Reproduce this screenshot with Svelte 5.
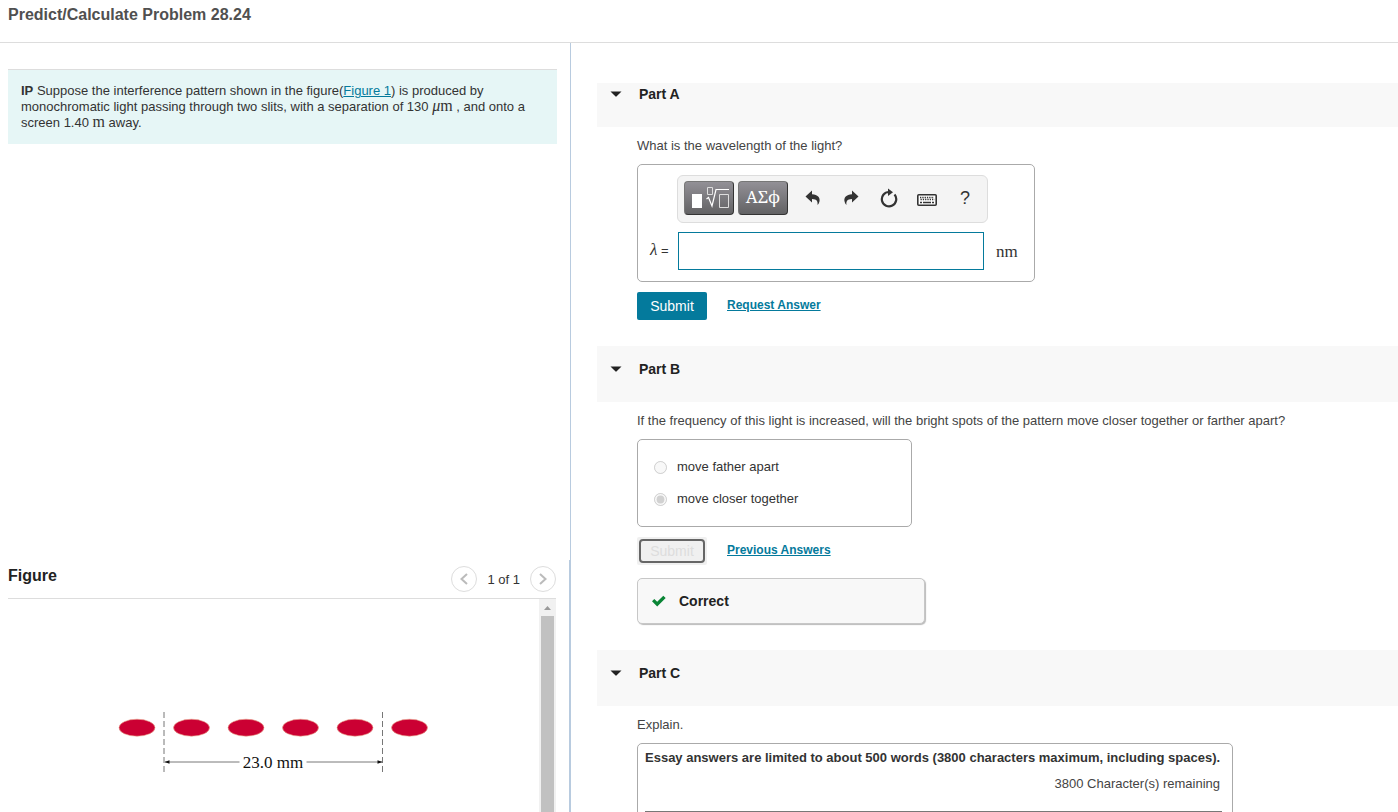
<script>
  let answer = $state('');
  let choice = $state('closer');
  let essay = $state('');

  const options = [
    { id: 'apart', label: 'move father apart' },
    { id: 'closer', label: 'move closer together' }
  ];
  const spots = [137, 191.5, 246, 300.5, 355, 409.5];
</script>

{#snippet partHeader(title)}
  <header class="part-head">
    <button class="toggle" type="button" aria-label={`Collapse ${title}`}>
      <svg width="12" height="6" viewBox="0 0 12 6"><path d="M.5.4h11L6.7 5.3Q6 6 5.3 5.3Z" fill="#222" /></svg>
    </button>
    <h2>{title}</h2>
  </header>
{/snippet}

<div class="page">
  <header class="title"><h1>Predict/Calculate Problem 28.24</h1></header>

  <main>
    <aside>
      <section class="intro">
        <p>
          <b>IP</b> Suppose the interference pattern shown in the figure(<a href="#figure">Figure 1</a>) is produced by
          monochromatic light passing through two slits, with a separation of 130 <span class="math"><i>μ</i>m</span> , and onto a screen 1.40 <span class="math">m</span> away.
        </p>
      </section>

      <section class="figure" id="figure">
        <div class="figure-head">
          <h2>Figure</h2>
          <nav>
            <button type="button" aria-label="Previous figure">
              <svg width="12" height="14" viewBox="0 0 12 14"><path d="M9 2 3.5 7 9 12" fill="none" stroke="#bbb" stroke-width="2" /></svg>
            </button>
            <span>1 of 1</span>
            <button type="button" aria-label="Next figure">
              <svg width="12" height="14" viewBox="0 0 12 14"><path d="M3 2l5.500 5L3 12" fill="none" stroke="#bbb" stroke-width="2" /></svg>
            </button>
          </nav>
        </div>
        <div class="viewer">
          <div class="canvas">
            <svg width="340" height="90" viewBox="100 700 340 90">
              {#each spots as x}
                <ellipse cx={x} cy="727.700" rx="18" ry="8.500" fill="#cb0033" stroke="#e9a58c" stroke-width=".6" />
              {/each}
              <path d="M164 712v61M382.500 712v61" stroke="#777" stroke-dasharray="6 3" fill="none" />
              <path d="M165 762h74.500M306.500 762H382" stroke="#555" stroke-width=".8" />
              <path d="M164.500 762l5-1.800v3.600ZM382.500 762l-5-1.800v3.600Z" fill="#111" />
              <text x="273" y="767.500" text-anchor="middle" font-family="'Liberation Serif', serif" font-size="17" fill="#111">23.0 mm</text>
            </svg>
          </div>
          <div class="scrollbar">
            <button type="button" aria-label="Scroll up">
              <svg width="7" height="4" viewBox="0 0 7 4"><path d="M0 4 3.500 0 7 4Z" fill="#999" /></svg>
            </button>
            <div class="thumb"></div>
          </div>
        </div>
      </section>
    </aside>

    <div class="parts">
      <section class="part first">
        {@render partHeader('Part A')}
        <div class="body">
          <p>What is the wavelength of the light?</p>
          <div class="box equation">
            <div class="toolbar">
              <button class="dark" type="button" aria-label="Templates">
                <svg width="40" height="24" viewBox="0 0 40 24">
                  <path d="M3 8h10v14H3Z" fill="#fff" />
                  <path d="M18.500 1.500h5v7h-5ZM30.500 8.500h9v13h-9Z" fill="none" stroke="#ddd" />
                  <path d="M17.500 13l2-1.500 3.500 8.500 4-16.500H40" fill="none" stroke="#fff" stroke-width="1.200" />
                </svg>
              </button>
              <button class="dark greek" type="button">ΑΣϕ</button>
              <div class="tools">
                <button type="button" aria-label="Undo">
                  <svg width="16" height="18" viewBox="0 0 16 16"><path d="M.5 6.500 7 .5v3.700c5.800.2 8.300 3.500 7.500 7-.3 1.500-1 3-2 3.900.5-3.400-.3-6-5.500-6.100V12.500Z" fill="#333" /></svg>
                </button>
                <button type="button" aria-label="Redo">
                  <svg width="16" height="18" viewBox="0 0 16 16"><path d="M15.500 6.500 9 .5v3.700c-5.800.2-8.300 3.500-7.500 7 .3 1.500 1 3 2 3.900-.5-3.400.3-6 5.500-6.100V12.500Z" fill="#333" /></svg>
                </button>
                <button type="button" aria-label="Reset">
                  <svg width="18" height="20" viewBox="0 0 18 20"><path d="M9 4A7.200 7.200 0 1 0 14.500 6.500" fill="none" stroke="#333" stroke-width="2.200" /><path d="M8 .5 13 4.300 8 8Z" fill="#333" /></svg>
                </button>
                <button type="button" aria-label="Keyboard shortcuts">
                  <svg class="low" width="20" height="12" viewBox="0 0 20 12">
                    <rect x=".8" y=".8" width="18.400" height="10.400" rx="1" fill="#fff" stroke="#333" stroke-width="1.600" />
                    <path d="M3 3.500h14M3.500 5.500h14" stroke="#333" stroke-width="1.400" stroke-dasharray="1.300 1" />
                    <path d="M3 8.500h2M6 8.500h8M15 8.500h2" stroke="#333" stroke-width="1.400" />
                  </svg>
                </button>
                <button class="help" type="button">?</button>
              </div>
            </div>
            <div class="entry">
              <label for="lambda"><i>λ</i> =</label>
              <input id="lambda" type="text" bind:value={answer} />
              <span class="math">nm</span>
            </div>
          </div>
          <div class="actions">
            <button class="submit" type="button">Submit</button>
            <a href="#request">Request Answer</a>
          </div>
        </div>
      </section>

      <section class="part">
        {@render partHeader('Part B')}
        <div class="body">
          <p>If the frequency of this light is increased, will the bright spots of the pattern move closer together or farther apart?</p>
          <div class="box choices">
            {#each options as option}
              <label>
                <input type="radio" name="spots" value={option.id} bind:group={choice} disabled />
                {option.label}
              </label>
            {/each}
          </div>
          <div class="actions">
            <button class="submit" type="button" disabled><span>Submit</span></button>
            <a href="#previous">Previous Answers</a>
          </div>
          <div class="feedback">
            <svg width="16" height="12" viewBox="0 0 16 12"><path d="M1 6.200 3.300 4 6.200 6.800 12.300.7 14.700 2.900 6.200 11.400Z" fill="#0a8536" /></svg>
            <strong>Correct</strong>
          </div>
        </div>
      </section>

      <section class="part">
        {@render partHeader('Part C')}
        <div class="body">
          <p>Explain.</p>
          <div class="box essay">
            <label for="essay">Essay answers are limited to about 500 words (3800 characters maximum, including spaces).</label>
            <span>{3800 - essay.length} Character(s) remaining</span>
            <textarea id="essay" bind:value={essay}></textarea>
          </div>
        </div>
      </section>
    </div>
  </main>
</div>

<style>
  :global(body) {
    margin: 0;
    background: #fff;
  }
  .page {
    height: 100vh;
    display: flex;
    flex-direction: column;
    overflow: hidden;
    font: 13px/16px 'Liberation Sans', Arial, sans-serif;
    color: #444;
  }
  .page * {
    box-sizing: border-box;
  }
  h1,
  h2,
  p {
    margin: 0;
  }
  button {
    font: inherit;
    color: inherit;
    padding: 0;
    border: 0;
    background: none;
    display: flex;
    align-items: center;
    justify-content: center;
    cursor: pointer;
  }
  a {
    color: #047a9c;
  }
  .math {
    font-family: 'Liberation Serif', serif;
    font-size: 16px;
    line-height: 1px;
  }
  .title {
    flex: none;
    padding: 5px 8px 17px;
    border-bottom: 1px solid #ddd;
  }
  .title h1 {
    font-size: 16px;
    line-height: 20px;
    color: #505050;
  }
  main {
    flex: 1;
    min-height: 0;
    display: grid;
    grid-template-columns: minmax(0, 571fr) minmax(0, 827fr);
  }
  aside {
    min-height: 0;
    display: flex;
    flex-direction: column;
  }
  .intro {
    flex: 1;
    padding: 26px 13px 0 8px;
    border-right: 1px solid #b8cbdf;
  }
  .intro p {
    padding: 13px 20px 13px 13px;
    border-top: 1px solid #ddd;
    background: #e6f6f6;
    color: #333;
  }
  .intro b {
    font-weight: bold;
  }
  .figure {
    height: 252px;
    display: flex;
    flex-direction: column;
    padding: 0 13px 0 8px;
    border-right: 2px solid #b8cbdf;
  }
  .figure-head {
    display: flex;
    justify-content: space-between;
    padding: 6px 0;
    border-bottom: 1px solid #ddd;
  }
  .figure-head h2 {
    font-size: 16px;
    line-height: 20px;
    color: #222;
  }
  nav {
    display: flex;
    align-items: center;
    gap: 10px;
    color: #333;
  }
  nav span {
    line-height: 14px;
    padding-top: 2px;
  }
  nav button {
    width: 26px;
    height: 26px;
    border: 1px solid #ddd;
    border-radius: 50%;
  }
  .viewer {
    flex: 1;
    min-height: 0;
    display: flex;
  }
  .canvas {
    flex: 1;
    padding: 101px 0 0 92px;
    overflow: hidden;
  }
  .canvas svg {
    display: block;
  }
  .scrollbar {
    width: 17px;
    display: flex;
    flex-direction: column;
    background: #f1f1f1;
  }
  .scrollbar button {
    height: 17px;
  }
  .thumb {
    flex: 1;
    margin: 0 2px;
    background: #c1c1c1;
  }
  .parts {
    padding: 40px 0 0 26px;
    overflow: hidden;
  }
  .part {
    margin-bottom: 26px;
  }
  .part-head {
    display: flex;
    align-items: center;
    gap: 17px;
    padding: 13px 13px 23px;
    background: #f8f8f8;
  }
  .first .part-head {
    padding-top: 1px;
  }
  .toggle {
    width: 12px;
    height: 20px;
  }
  .part-head h2 {
    font-size: 14px;
    line-height: 20px;
    color: #222;
  }
  .body {
    padding: 11px 40px 0;
  }
  .box {
    margin-top: 10px;
    border: 1px solid #aaa;
    border-radius: 5px;
  }
  .equation {
    width: 398px;
    max-width: 100%;
    padding: 10px 11px 11px;
  }
  .toolbar {
    width: 311px;
    margin-left: 28px;
    padding: 5px 0 7px 6px;
    display: flex;
    align-items: center;
    gap: 4px;
    border: 1px solid #ddd;
    border-radius: 6px;
    background: #f4f4f4;
  }
  .dark {
    flex: none;
    width: 50px;
    height: 34px;
    border: 1px solid #333;
    border-top-color: #777;
    border-left-color: #777;
    border-radius: 4px;
    background: linear-gradient(#929096, #626264);
    color: #fff;
  }
  .greek {
    font: 17px/20px 'Noto Serif', 'Liberation Serif', serif;
    padding-bottom: 2px;
  }
  .tools {
    display: flex;
    margin-left: 2px;
  }
  .tools button {
    width: 38px;
    height: 34px;
    color: #333;
  }
  .tools .help {
    font-size: 18px;
  }
  .low {
    margin-top: 4px;
  }
  .entry {
    margin-top: 9px;
    display: grid;
    grid-template-columns: 29px minmax(0, 306px) auto;
    align-items: center;
    color: #333;
  }
  .entry label {
    padding-left: 1px;
    line-height: 18px;
  }
  .entry label i {
    font: italic 17px/16px 'Liberation Serif', serif;
  }
  .entry input {
    height: 38px;
    padding: 0 8px;
    border: 1px solid #047a9c;
    border-radius: 0;
    outline: 0;
    font: inherit;
  }
  .entry .math {
    margin-left: 12px;
    font-size: 17px;
  }
  .actions {
    display: flex;
    align-items: center;
    gap: 20px;
    margin-top: 10px;
  }
  .actions a {
    font-size: 12px;
    line-height: 16px;
    font-weight: bold;
    padding-bottom: 2px;
  }
  .submit {
    width: 70px;
    height: 28px;
    border-radius: 2px;
    background: #047a9c;
    color: #fff;
    font-size: 14px;
  }
  .submit:disabled {
    padding: 2px;
    background: #f0f0f0;
    color: #ddd;
  }
  .submit:disabled span {
    width: 100%;
    line-height: 20px;
    border: 2px solid #666;
    border-radius: 4px;
  }
  .choices {
    width: 275px;
    max-width: 100%;
    padding: 19px 16px;
    display: grid;
    gap: 16px;
    color: #333;
  }
  .choices label {
    display: flex;
    align-items: center;
    gap: 10px;
  }
  .choices input {
    width: 13px;
    height: 13px;
    margin: 0;
  }
  .feedback {
    width: 288px;
    max-width: 100%;
    margin-top: 13px;
    padding: 14px 13px;
    display: flex;
    align-items: center;
    gap: 12px;
    border: 1px solid #c7c7c7;
    border-radius: 5px;
    background: #f8f8f8;
    box-shadow: 1px 1px 1px #bbb;
    color: #222;
    font-size: 14px;
  }
  .essay {
    width: 596px;
    max-width: 100%;
    padding: 6px 10px 10px 7px;
    display: flex;
    flex-direction: column;
  }
  .essay label {
    font-weight: bold;
    color: #333;
  }
  .essay span {
    margin: 10px 2px 19px;
    text-align: right;
  }
  .essay textarea {
    height: 120px;
    border: 1px solid #777;
    border-radius: 0;
    resize: none;
  }
</style>
